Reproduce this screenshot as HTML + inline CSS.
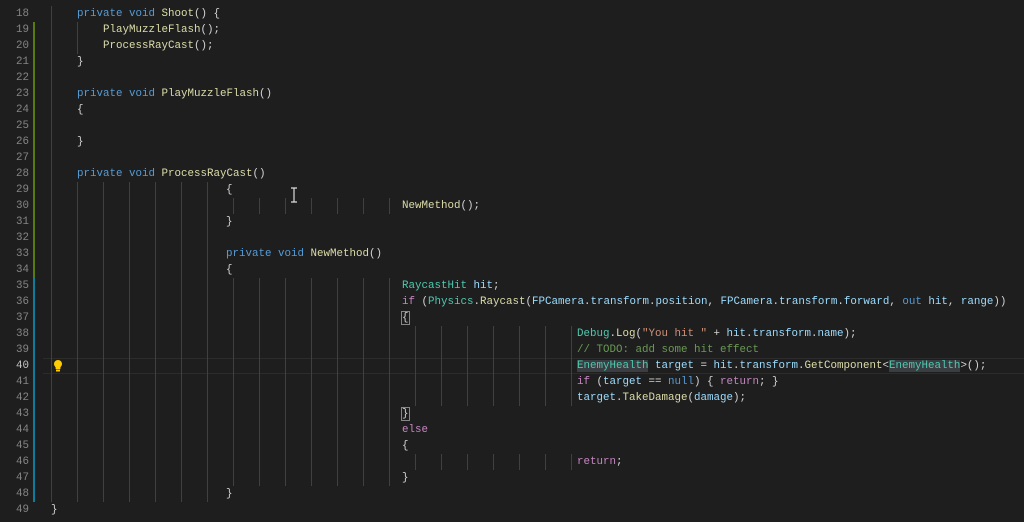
<!DOCTYPE html>
<html><head><meta charset="utf-8"><style>
body{margin:0;width:1024px;height:522px;background:#1e1e1e;overflow:hidden;position:relative;font-family:"Liberation Mono",monospace;font-size:10.83px;}
.l{position:absolute;height:16px;line-height:16px;white-space:pre;color:#d4d4d4;}
.n{position:absolute;left:0;width:29px;text-align:right;height:16px;line-height:16px;color:#858585;}
.g{position:absolute;left:51px;height:16px;background:repeating-linear-gradient(to right,#404040 0 1px,transparent 1px 26px);}
.k{color:#569cd6}.c{color:#c586c0}.m{color:#dcdcaa}.t{color:#4ec9b0}.v{color:#9cdcfe}.s{color:#ce9178}.cm{color:#6a9955}
.hl{background:#3a3d41}
.bx{outline:1px solid #888;}
</style></head><body>
<div style="position:absolute;left:43px;top:358px;width:981px;height:14px;border-top:1px solid #2c2c2c;border-bottom:1px solid #2c2c2c"></div>
<div style="position:absolute;left:33px;top:22px;width:2px;height:256px;background:#587c0c"></div>
<div style="position:absolute;left:33px;top:278px;width:2px;height:224px;background:#0c7d9d"></div>
<div style="position:absolute;left:51px;top:6px;width:1px;height:496px;background:#404040"></div>
<div class="g" style="top:22px;width:27px"></div>
<div class="g" style="top:38px;width:27px"></div>
<div class="g" style="top:182px;width:157px"></div>
<div class="g" style="top:198px;width:339px"></div>
<div class="g" style="top:214px;width:157px"></div>
<div class="g" style="top:230px;width:157px"></div>
<div class="g" style="top:246px;width:157px"></div>
<div class="g" style="top:262px;width:157px"></div>
<div class="g" style="top:278px;width:339px;height:48px"></div>
<div class="g" style="top:326px;width:521px;height:80px"></div>
<div class="g" style="top:406px;width:339px;height:48px"></div>
<div class="g" style="top:454px;width:521px"></div>
<div class="g" style="top:470px;width:339px"></div>
<div class="g" style="top:486px;width:157px"></div>

<div class="n" style="top:-10px">17</div>
<div class="n" style="top:6px">18</div>
<div class="n" style="top:22px">19</div>
<div class="n" style="top:38px">20</div>
<div class="n" style="top:54px">21</div>
<div class="n" style="top:70px">22</div>
<div class="n" style="top:86px">23</div>
<div class="n" style="top:102px">24</div>
<div class="n" style="top:118px">25</div>
<div class="n" style="top:134px">26</div>
<div class="n" style="top:150px">27</div>
<div class="n" style="top:166px">28</div>
<div class="n" style="top:182px">29</div>
<div class="n" style="top:198px">30</div>
<div class="n" style="top:214px">31</div>
<div class="n" style="top:230px">32</div>
<div class="n" style="top:246px">33</div>
<div class="n" style="top:262px">34</div>
<div class="n" style="top:278px">35</div>
<div class="n" style="top:294px">36</div>
<div class="n" style="top:310px">37</div>
<div class="n" style="top:326px">38</div>
<div class="n" style="top:342px">39</div>
<div class="n" style="top:358px;color:#c6c6c6">40</div>
<div class="n" style="top:374px">41</div>
<div class="n" style="top:390px">42</div>
<div class="n" style="top:406px">43</div>
<div class="n" style="top:422px">44</div>
<div class="n" style="top:438px">45</div>
<div class="n" style="top:454px">46</div>
<div class="n" style="top:470px">47</div>
<div class="n" style="top:486px">48</div>
<div class="n" style="top:502px">49</div>

<div class="l" style="top:6px;left:77px"><span class="k">private</span> <span class="k">void</span> <span class="m">Shoot</span>() {</div>
<div class="l" style="top:22px;left:103px"><span class="m">PlayMuzzleFlash</span>();</div>
<div class="l" style="top:38px;left:103px"><span class="m">ProcessRayCast</span>();</div>
<div class="l" style="top:54px;left:77px">}</div>
<div class="l" style="top:86px;left:77px"><span class="k">private</span> <span class="k">void</span> <span class="m">PlayMuzzleFlash</span>()</div>
<div class="l" style="top:102px;left:77px">{</div>
<div class="l" style="top:134px;left:77px">}</div>
<div class="l" style="top:166px;left:77px"><span class="k">private</span> <span class="k">void</span> <span class="m">ProcessRayCast</span>()</div>
<div class="l" style="top:182px;left:226px">{</div>
<div class="l" style="top:198px;left:402px"><span class="m">NewMethod</span>();</div>
<div class="l" style="top:214px;left:226px">}</div>
<div class="l" style="top:246px;left:226px"><span class="k">private</span> <span class="k">void</span> <span class="m">NewMethod</span>()</div>
<div class="l" style="top:262px;left:226px">{</div>
<div class="l" style="top:278px;left:402px"><span class="t">RaycastHit</span> <span class="v">hit</span>;</div>
<div class="l" style="top:294px;left:402px"><span class="c">if</span> (<span class="t">Physics</span>.<span class="m">Raycast</span>(<span class="v">FPCamera</span>.<span class="v">transform</span>.<span class="v">position</span>, <span class="v">FPCamera</span>.<span class="v">transform</span>.<span class="v">forward</span>, <span class="k">out</span> <span class="v">hit</span>, <span class="v">range</span>))</div>
<div class="l" style="top:310px;left:402px"><span class="bx">{</span></div>
<div class="l" style="top:326px;left:577px"><span class="t">Debug</span>.<span class="m">Log</span>(<span class="s">"You hit "</span> + <span class="v">hit</span>.<span class="v">transform</span>.<span class="v">name</span>);</div>
<div class="l" style="top:342px;left:577px"><span class="cm">// TODO: add some hit effect</span></div>
<div class="l" style="top:358px;left:577px"><span class="t hl">EnemyHealth</span> <span class="v">target</span> = <span class="v">hit</span>.<span class="v">transform</span>.<span class="m">GetComponent</span>&lt;<span class="t hl">EnemyHealth</span>&gt;();</div>
<div class="l" style="top:374px;left:577px"><span class="c">if</span> (<span class="v">target</span> == <span class="k">null</span>) { <span class="c">return</span>; }</div>
<div class="l" style="top:390px;left:577px"><span class="v">target</span>.<span class="m">TakeDamage</span>(<span class="v">damage</span>);</div>
<div class="l" style="top:406px;left:402px"><span class="bx">}</span></div>
<div class="l" style="top:422px;left:402px"><span class="c">else</span></div>
<div class="l" style="top:438px;left:402px">{</div>
<div class="l" style="top:454px;left:577px"><span class="c">return</span>;</div>
<div class="l" style="top:470px;left:402px">}</div>
<div class="l" style="top:486px;left:226px">}</div>
<div class="l" style="top:502px;left:51px">}</div>

<svg style="position:absolute;left:52px;top:359px" width="12" height="14" viewBox="0 0 12 14"><path d="M6 1a4 4 0 0 0-4 4c0 1.6 1 2.4 1.6 3.4V10h4.8V8.4C9 7.4 10 6.6 10 5a4 4 0 0 0-4-4z" fill="#ffcc00"/><rect x="4" y="10.5" width="4" height="2" fill="#ffcc00"/></svg>
<svg style="position:absolute;left:290px;top:187px" width="8" height="16" viewBox="0 0 8 16"><path d="M1 1h6M1 15h6M4 1v14" stroke="#ddd" stroke-width="1.2" fill="none"/></svg>
</body></html>
